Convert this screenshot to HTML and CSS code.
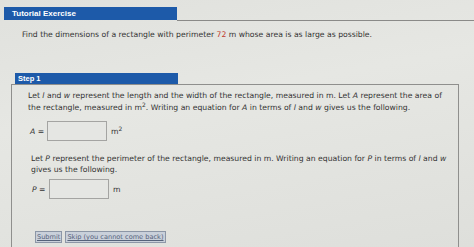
FILE: index.html
```html
<!DOCTYPE html>
<html>
<head>
<meta charset="utf-8">
<link rel="stylesheet" href="styles.css">
</head>
<body>
<div class="page">
  <div class="header">
    <div class="tab">Tutorial Exercise</div>
    <div class="rule"></div>
  </div>
  <p class="intro">Find the dimensions of a rectangle with perimeter <span class="num">72</span> m whose area is as large as possible.</p>

  <div class="step">
    <div class="step-tab">Step 1</div>
    <div class="box">
      <p class="para first">Let <i>l</i> and <i>w</i> represent the length and the width of the rectangle, measured in m. Let <i>A</i> represent the area of the rectangle, measured in m<sup>2</sup>. Writing an equation for <i>A</i> in terms of <i>l</i> and <i>w</i> gives us the following.</p>
      <div class="eq eq-a">
        <span class="lhs"><i>A</i> =</span>
        <span class="input"></span>
        <span class="unit">m<sup>2</sup></span>
      </div>
      <p class="para second">Let <i>P</i> represent the perimeter of the rectangle, measured in m. Writing an equation for <i>P</i> in terms of <i>l</i> and <i>w</i> gives us the following.</p>
      <div class="eq eq-p">
        <span class="lhs"><i>P</i> =</span>
        <span class="input"></span>
        <span class="unit">m</span>
      </div>
      <div class="buttons">
        <span class="btn">Submit</span>
        <span class="btn">Skip (you cannot come back)</span>
      </div>
    </div>
  </div>
</div>
</body>
</html>
```

FILE: styles.css
```css
html, body {
  margin: 0;
  padding: 0;
}
body {
  width: 474px;
  height: 247px;
  overflow: hidden;
  background: linear-gradient(170deg, #e0e1dd 0%, #e6e7e3 40%, #dedfdb 100%);
  font-family: "DejaVu Sans", Verdana, sans-serif;
  color: #333333;
  font-size: 7.7px;
}
.page {
  padding-top: 7px;
}
.header {
  display: flex;
  align-items: flex-end;
  padding-left: 4px;
}
.tab {
  width: 165px;
  height: 13px;
  background: #1d5aa9;
  color: #fff;
  font-family: "Liberation Sans", Arial, sans-serif;
  font-weight: bold;
  font-size: 8px;
  line-height: 13px;
  padding-left: 8px;
}
.rule {
  flex: 1;
  border-bottom: 1px solid #8a8a88;
  margin-bottom: -1px;
}
.intro {
  margin: 9px 0 0 22px;
  line-height: 11px;
}
.num {
  color: #c0392b;
}
.step {
  margin-top: 33px;
}
.step-tab {
  margin-left: 15px;
  width: 160px;
  height: 11px;
  background: #1d5aa9;
  color: #fff;
  font-family: "Liberation Sans", Arial, sans-serif;
  font-weight: bold;
  font-size: 7.5px;
  line-height: 11px;
  padding-left: 3px;
}
.box {
  margin-left: 11px;
  width: 448px;
  height: 166px;
  border: 1px solid #8f8f8d;
  padding: 5px 0 0 16px;
  box-sizing: border-box;
}
.para {
  margin: 0;
  line-height: 12px;
  width: 420px;
}
sup {
  font-size: 6px;
  line-height: 0;
  vertical-align: 3px;
}
.eq {
  display: flex;
  align-items: center;
}
.eq-a {
  margin-top: 7px;
  padding-left: 2px;
}
.eq-p {
  margin-top: 4px;
  padding-left: 4px;
}
.lhs {
  width: 17px;
}
.input {
  width: 58px;
  height: 18px;
  border: 1px solid #a4a4a2;
  background: #e5e6e3;
  margin-right: 4px;
}
.second {
  margin-top: 12px;
  padding-left: 3px;
  line-height: 11px;
}
.buttons {
  display: flex;
  gap: 3px;
  margin-top: 32px;
  padding-left: 7px;
}
.btn {
  height: 10px;
  line-height: 10px;
  padding: 0 1px;
  font-size: 6.6px;
  background: #c9d0da;
  color: #55627a;
  border: 1px solid #8c96a6;
  text-decoration: underline;
}
```
